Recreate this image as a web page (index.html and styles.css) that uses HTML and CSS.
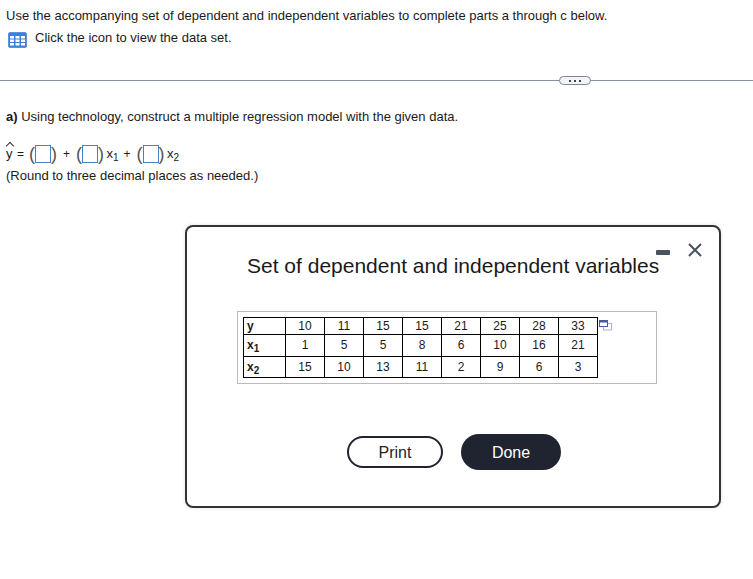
FILE: index.html
```html
<!DOCTYPE html>
<html lang="en">
<head>
<meta charset="utf-8">
<title>Multiple regression</title>
<link rel="stylesheet" href="styles.css">
</head>
<body>
<header class="intro">
  <p class="line">Use the accompanying set of dependent and independent variables to complete parts a through c below.</p>
  <p class="line icon-line">
    <svg class="grid-icon" width="19" height="16" viewBox="0 0 19 16"><rect x="0.5" y="0.5" width="18" height="15" rx="1.5" fill="#3f7fd8" stroke="#5b93e0"/><g fill="#fff"><rect x="2" y="4" width="4" height="2.5"/><rect x="7.5" y="4" width="4" height="2.5"/><rect x="13" y="4" width="4" height="2.5"/><rect x="2" y="7.5" width="4" height="2.5"/><rect x="7.5" y="7.5" width="4" height="2.5"/><rect x="13" y="7.5" width="4" height="2.5"/><rect x="2" y="11" width="4" height="2.5"/><rect x="7.5" y="11" width="4" height="2.5"/><rect x="13" y="11" width="4" height="2.5"/></g></svg>
    <span>Click the icon to view the data set.</span>
  </p>
</header>
<div class="divider"><span class="more"><i></i><i></i><i></i></span></div>
<main class="question">
  <p class="line"><b>a)</b> Using technology, construct a multiple regression model with the given data.</p>
  <div class="equation">
    <span class="yhat">y</span><span class="t eq">=</span>
    <span class="paren">(</span><span class="box"></span><span class="paren close">)</span>
    <span class="t plus">+</span>
    <span class="paren">(</span><span class="box"></span><span class="paren close">)</span>
    <span class="t var">x<sub>1</sub></span>
    <span class="t plus">+</span>
    <span class="paren">(</span><span class="box"></span><span class="paren close">)</span>
    <span class="t var">x<sub>2</sub></span>
  </div>
  <p class="line note">(Round to three decimal places as needed.)</p>
</main>
<section class="modal">
  <div class="controls"><span class="minimize"></span>
    <svg class="close-x" width="16" height="16" viewBox="0 0 16 16"><path d="M2 2 L14 14 M14 2 L2 14" stroke="#48525f" stroke-width="2" fill="none"/></svg>
  </div>
  <h1 class="title">Set of dependent and independent variables</h1>
  <div class="table-frame">
    <table class="data">
      <tr class="r1"><th>y</th><td>10</td><td>11</td><td>15</td><td>15</td><td>21</td><td>25</td><td>28</td><td>33</td></tr>
      <tr class="r2"><th>x<sub>1</sub></th><td>1</td><td>5</td><td>5</td><td>8</td><td>6</td><td>10</td><td>16</td><td>21</td></tr>
      <tr class="r3"><th>x<sub>2</sub></th><td>15</td><td>10</td><td>13</td><td>11</td><td>2</td><td>9</td><td>6</td><td>3</td></tr>
    </table>
    <svg class="copy" width="13" height="11" viewBox="0 0 13 11"><rect x="4.5" y="3.5" width="8" height="6.5" fill="#fff" stroke="#a9b0d0"/><rect x="0.5" y="0.5" width="8" height="6" fill="#fff" stroke="#4a5a9a"/><rect x="0" y="0" width="9" height="2.5" fill="#4a5a9a"/></svg>
  </div>
  <div class="actions">
    <button class="btn print">Print</button>
    <button class="btn done">Done</button>
  </div>
</section>
</body>
</html>
```
FILE: styles.css
```css
* { box-sizing: border-box; }
html, body { margin: 0; padding: 0; }
body {
  width: 753px;
  height: 579px;
  position: relative;
  overflow: hidden;
  background: #fff;
  font-family: "Liberation Sans", Arial, sans-serif;
  font-size: 13px;
  color: #1a1a1a;
}
.line { margin: 0; line-height: 16px; }
.intro { padding: 8px 6px 0; height: 80px; }
.icon-line { display: flex; align-items: flex-start; gap: 8px; margin-top: 6px; padding-left: 2px; }
.icon-line span { line-height: 16px; }
.grid-icon { display: block; margin-top: 2px; }
.divider { height: 1px; background: #8a8fa3; position: relative; }
.more {
  position: absolute;
  left: 559px;
  top: -4px;
  width: 32px;
  height: 9px;
  display: flex;
  justify-content: center;
  align-items: center;
  gap: 3px;
  background: #f2f4f7;
  border: 1px solid #7d8597;
  border-radius: 5px;
}
.more i { width: 2px; height: 2px; background: #3c4454; display: block; }
.question { padding: 28px 6px 0; }
.equation { display: flex; align-items: center; height: 22px; margin-top: 18px; font-size: 12px; }
.yhat { position: relative; margin-right: 4.5px; line-height: 14px; font-size: 13px; }
.yhat::before {
  content: "";
  position: absolute;
  left: 1px;
  top: -4px;
  width: 5px;
  height: 5px;
  border-left: 1px solid #333;
  border-top: 1px solid #333;
  transform: rotate(45deg);
}
.t { line-height: 14px; }
.t sub, th sub { font-size: 10px; line-height: 0; vertical-align: -3px; }
.eq { margin-right: 4px; }
.plus { margin: 0 5px 0 7px; }
.var + .plus { margin-left: 5px; }
.var { margin-left: 3.5px; font-size: 13px; }
.paren { width: 7px; font-size: 18px; line-height: 20px; color: #555; text-align: right; }
.paren.close { width: 5px; text-align: left; }
.box { width: 16px; height: 18px; border: 1px solid #4a7fc9; background: #fff; display: block; }
.note { margin-top: 3px; }
.modal {
  position: absolute;
  left: 185px;
  top: 225px;
  width: 536px;
  height: 283px;
  background: #fff;
  border: 2px solid #333;
  border-radius: 8px;
  box-shadow: 0 0 4px rgba(0, 0, 0, 0.12);
  padding-top: 27px;
}
.controls { position: absolute; top: 0; left: 0; width: 100%; height: 0; }
.minimize {
  position: absolute;
  left: 469px;
  top: 23px;
  width: 14px;
  height: 5px;
  border-radius: 1px;
  background: #4a5360;
}
.close-x { position: absolute; left: 500px; top: 15px; }
.title {
  margin: 0 0 0 60px;
  font-size: 21px;
  line-height: 24px;
  font-weight: 400;
  color: #1a1a1a;
  white-space: nowrap;
}
.table-frame {
  margin: 33px 0 0 50px;
  width: 420px;
  height: 73px;
  border: 1px solid #bbb;
  padding: 5px;
  display: flex;
  align-items: flex-start;
  gap: 1px;
}
.data { border-collapse: collapse; table-layout: fixed; width: 353px; font-size: 12px; line-height: 14px; }
.data th, .data td { border: 1px solid #000; padding: 0; font-weight: 400; text-align: center; width: 39px; }
.data th { width: 42px; text-align: left; padding-left: 3px; font-weight: 700; }
.r1 { height: 17px; }
.r2 { height: 22px; }
.r2 th, .r2 td { padding-bottom: 2px; }
.r3 { height: 21px; }
.copy { margin-top: 3px; display: block; }
.actions { display: flex; align-items: center; gap: 18px; margin: 50px 0 0 160px; }
.btn { font-family: inherit; font-size: 16px; border-radius: 18px; padding: 2px 0 0; }
.print { width: 96px; height: 32px; background: #fff; color: #1f2430; border: 2px solid #1f2430; }
.done { width: 100px; height: 36px; background: #1f2430; color: #fff; border: 0; }
```
